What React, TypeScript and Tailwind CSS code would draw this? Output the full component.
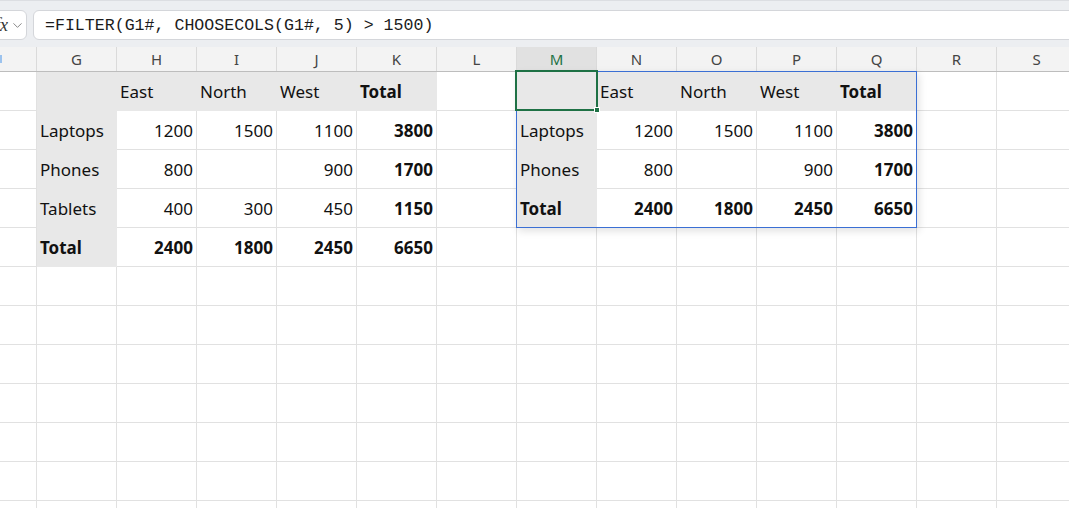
import { ChevronDown } from 'lucide-react';

type Cell = { v?: string; gray?: boolean; bold?: boolean; num?: boolean };

const COLS = ['', 'G', 'H', 'I', 'J', 'K', 'L', 'M', 'N', 'O', 'P', 'Q', 'R', 'S'];

const left: string[][] = [
  ['', 'East', 'North', 'West', 'Total'],
  ['Laptops', '1200', '1500', '1100', '3800'],
  ['Phones', '800', '', '900', '1700'],
  ['Tablets', '400', '300', '450', '1150'],
  ['Total', '2400', '1800', '2450', '6650'],
];

const right: string[][] = [
  ['', 'East', 'North', 'West', 'Total'],
  ['Laptops', '1200', '1500', '1100', '3800'],
  ['Phones', '800', '', '900', '1700'],
  ['Total', '2400', '1800', '2450', '6650'],
];

function placeTable(grid: Cell[][], data: string[][], startCol: number) {
  data.forEach((row, r) => {
    const lastRow = r === data.length - 1;
    row.forEach((v, c) => {
      const header = r === 0;
      const label = c === 0;
      grid[r][startCol + c] = {
        v,
        gray: header || label,
        bold: (header && c === 4) || (label && lastRow) || (!header && c === 4) || (lastRow && !label),
        num: !header && !label,
      };
    });
  });
}

function buildGrid() {
  const rows = 12;
  const grid: Cell[][] = Array.from({ length: rows }, () => COLS.map(() => ({})));
  placeTable(grid, left, 1);
  placeTable(grid, right, 7);
  return grid;
}

export default function App() {
  const grid = buildGrid();

  return (
    <div
      className="w-[1069px] h-[508px] overflow-hidden bg-white text-[#111]"
      style={{ fontFamily: '"Noto Sans", "Open Sans", sans-serif' }}
    >
      {/* Formula bar */}
      <div className="h-[47px] bg-[#eceef1] border-t border-[#dcdee2] flex items-start pt-[9px] gap-[6px]">
        <div className="ml-[-22px] w-[49px] h-[30px] bg-white border border-[#d4d6da] rounded-md flex items-center justify-end pr-[1px] gap-[2px]">
          <span className="italic text-[18px] text-[#333]" style={{ fontFamily: '"Liberation Serif", serif' }}>
            fx
          </span>
          <ChevronDown className="w-[15px] h-[15px] text-[#777]" strokeWidth={1.4} />
        </div>
        <div className="flex-1 h-[30px] bg-white border border-[#d4d6da] rounded-md mr-[-10px] flex items-center pl-[11px]">
          <span className="text-[16.6px] text-[#1b1b1b] pt-[3px]" style={{ fontFamily: '"Liberation Mono", monospace' }}>
            =FILTER(G1#, CHOOSECOLS(G1#, 5) &gt; 1500)
          </span>
        </div>
      </div>

      {/* Column headers */}
      <div className="grid grid-cols-[37px_repeat(13,80px)] h-[25px] bg-[#f3f3f3] border-b border-[#bdbdbd]">
        {COLS.map((c, i) => (
          <div
            key={i}
            className={`flex items-center justify-center text-[15px] border-r border-[#dadada] ${
              c === 'M' ? 'bg-[#e1e1e1] text-[#1e7145]' : 'text-[#444]'
            }`}
          >
            {c === '' ? <span className="mr-auto w-[2px] h-[8px] bg-[#9cc3ee]" /> : c}
          </div>
        ))}
      </div>

      {/* Sheet body */}
      <div className="relative">
        <div className="grid grid-cols-[37px_repeat(13,80px)] auto-rows-[39px]">
          {grid.map((row, r) =>
            row.map((cell, c) => (
              <div
                key={`${r}-${c}`}
                className={`flex items-center px-[3px] text-[17px] leading-none border-r border-b ${
                  cell.gray ? 'bg-[#e8e8e8] border-[#e8e8e8]' : 'border-[#e1e1e1]'
                } ${cell.num ? 'justify-end' : 'justify-start'} ${cell.bold ? 'font-bold' : ''}`}
              >
                {cell.v}
              </div>
            ))
          )}
        </div>

        {/* Spill range border */}
        <div className="absolute left-[516px] top-[-1px] w-[401px] h-[157px] border border-[#3b6fd4] shadow-[2px_3px_8px_rgba(0,0,0,0.12)] pointer-events-none" />

        {/* Active cell */}
        <div className="absolute left-[515px] top-[-2px] w-[83px] h-[41px] border-2 border-[#1e7145] pointer-events-none" />
        <div className="absolute left-[594px] top-[35px] w-[6px] h-[6px] bg-[#1e7145] border border-white pointer-events-none" />
      </div>
    </div>
  );
}
